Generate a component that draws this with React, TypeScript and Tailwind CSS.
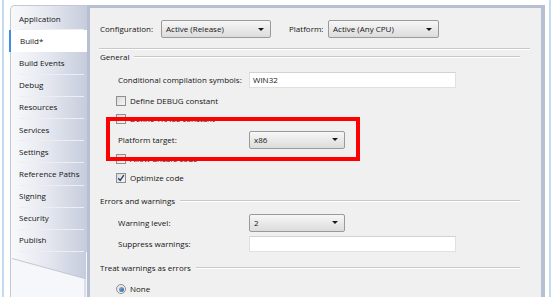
import React from "react";

const tabs = [
  "Application",
  "Build*",
  "Build Events",
  "Debug",
  "Resources",
  "Services",
  "Settings",
  "Reference Paths",
  "Signing",
  "Security",
  "Publish",
];

function Arrow() {
  return (
    <svg width="6" height="3" viewBox="0 0 6 3">
      <path d="M0 0h6L3 3z" fill="#1a1a1a" />
    </svg>
  );
}

function Select({ value, className }: { value: string; className: string }) {
  return (
    <div
      className={`flex h-[18px] items-center justify-between rounded-[2px] border border-[#9a9a9a] bg-gradient-to-b from-[#f7f7f7] to-[#dcdcdc] pl-[4px] pr-[6px] ${className}`}
    >
      <span>{value}</span>
      <Arrow />
    </div>
  );
}

function Input({ value, className }: { value?: string; className: string }) {
  return (
    <div
      className={`flex h-[16px] items-center border border-[#e0e0e0] border-t-[#d2d2d2] bg-white pl-[3px] ${className}`}
    >
      {value}
    </div>
  );
}

function Check({ checked }: { checked?: boolean }) {
  return (
    <div className="flex h-[10px] w-[10px] items-center justify-center border border-[#8e8f8f] bg-gradient-to-br from-[#d9d9d9] to-[#f7f7f7]">
      {checked && (
        <svg width="8" height="8" viewBox="0 0 8 8">
          <path d="M1.2 4.2L3.2 6.4L6.8 1.2" fill="none" stroke="#2a3f6e" strokeWidth="1.4" />
        </svg>
      )}
    </div>
  );
}

function Header({ label, className }: { label: string; className: string }) {
  return (
    <div className={`flex h-[12px] items-center pl-[10px] pr-[21px] ${className}`}>
      <span>{label}</span>
      <div className="ml-[5px] h-[2px] flex-1 border-t border-b border-t-[#c9c9c9] border-b-white" />
    </div>
  );
}

function CheckRow({ label, checked, className }: { label: string; checked?: boolean; className: string }) {
  return (
    <div className={`flex h-[14px] items-center gap-[4px] pl-[26px] ${className}`}>
      <Check checked={checked} />
      <span>{label}</span>
    </div>
  );
}

export default function App() {
  return (
    <div className="flex h-[297px] w-[552px] overflow-hidden bg-white font-['Open_Sans','Noto_Sans',sans-serif] text-[8px] leading-none text-[#151515]">
      {/* left window edge */}
      <div className="w-[10px] shrink-0">
        <div className="ml-[2px] h-full w-[2px] bg-[#c4dcf3]" />
      </div>

      {/* tab strip */}
      <div className="flex w-[77px] shrink-0 flex-col pt-[5px]">
        <div className="flex flex-col rounded-tl-[5px] border-l border-t border-[#c4c8d2] bg-gradient-to-r from-[#f8f9fb] via-[#e4e7ef] to-[#c6ccdc] pt-[2px]">
          {tabs.map((t) => {
            const sel = t === "Build*";
            return (
              <div
                key={t}
                className={`flex h-[22.2px] items-center ${
                  sel ? "-ml-[2px] border-l-[2px] border-[#3d8fe4] bg-white pl-[9px]" : "pl-[8px]"
                }`}
              >
                <div className="flex h-full flex-1 flex-col">
                  <div className="flex flex-1 items-center">{t}</div>
                  {!sel && <div className="mr-[3px] h-[1px] bg-[#eceef3]" />}
                </div>
              </div>
            );
          })}
        </div>
        <div className="flex-1">
          <svg width="77" height="100%" viewBox="0 0 77 45" preserveAspectRatio="none" className="block h-full">
            <defs>
              <linearGradient id="tg" x1="0" y1="0" x2="1" y2="0">
                <stop offset="0" stopColor="#f8f9fb" />
                <stop offset="0.5" stopColor="#e4e7ef" />
                <stop offset="1" stopColor="#c6ccdc" />
              </linearGradient>
            </defs>
            <rect x="0" y="0" width="77" height="45" fill="#f6f7fb" />
            <polygon points="0,0 76,0 76,27 0,6" fill="url(#tg)" />
            <line x1="2" y1="6.5" x2="75" y2="26.5" stroke="#c2c7d4" strokeWidth="1" />
            <line x1="75" y1="26.5" x2="75" y2="45" stroke="#c2c7d4" strokeWidth="1" />
            <line x1="0.5" y1="0" x2="0.5" y2="45" stroke="#c4c8d2" strokeWidth="1" />
          </svg>
        </div>
      </div>

      {/* main panel */}
      <div className="relative mt-[5px] flex w-[458px] shrink-0 flex-col border-l-[3px] border-r-[4px] border-t-[3px] border-[#b7bfd3] bg-[#f0f0f0]">
        {/* configuration row */}
        <div className="mt-[12px] flex h-[18px] items-center pl-[10px]">
          <span className="w-[61px]">Configuration:</span>
          <Select value="Active (Release)" className="w-[110px]" />
          <span className="ml-[18px] w-[39px]">Platform:</span>
          <Select value="Active (Any CPU)" className="w-[111px]" />
        </div>
        <div className="ml-[9px] mr-[11px] mt-[10px] h-[2px] border-t border-b border-t-[#c9c9c9] border-b-white" />

        <Header label="General" className="mt-[1px]" />

        <div className="mt-[9px] flex h-[16px] items-center pl-[28px]">
          <span className="w-[131px]">Conditional compilation symbols:</span>
          <Input value="WIN32" className="w-[207px]" />
        </div>

        <CheckRow label="Define DEBUG constant" className="mt-[6px]" />
        <CheckRow label="Define TRACE constant" className="mt-[4px]" />

        <div className="mt-[5px] flex h-[17px] items-center pl-[28px]">
          <span className="w-[131px]">Platform target:</span>
          <Select value="x86" className="h-[17px] w-[96px]" />
        </div>

        <CheckRow label="Allow unsafe code" className="mt-[4px]" />
        <CheckRow label="Optimize code" checked className="mt-[5px]" />

        <Header label="Errors and warnings" className="mt-[10px]" />

        <div className="mt-[7px] flex h-[17px] items-center pl-[28px]">
          <span className="w-[131px]">Warning level:</span>
          <Select value="2" className="h-[17px] w-[96px]" />
        </div>

        <div className="mt-[5px] flex h-[16px] items-center pl-[28px]">
          <span className="w-[131px]">Suppress warnings:</span>
          <Input className="w-[207px]" />
        </div>

        <Header label="Treat warnings as errors" className="mt-[10px]" />

        <div className="mt-[8px] flex h-[14px] items-center gap-[4px] pl-[26px]">
          <div className="flex h-[10px] w-[10px] items-center justify-center rounded-full border border-[#8e8f8f] bg-gradient-to-br from-[#e2e2e2] to-[#f8f8f8]">
            <div className="h-[5px] w-[5px] rounded-full bg-gradient-to-br from-[#8fb2e0] to-[#2f5da0]" />
          </div>
          <span>None</span>
        </div>

        {/* red annotation box */}
        <div className="absolute left-[16px] top-[109px] h-[44px] w-[254px] border-[4px] border-[#ff0000]" />
      </div>

      {/* right window edge */}
      <div className="w-[7px] shrink-0">
        <div className="ml-[4px] h-full w-[2px] bg-[#c4dcf3]" />
      </div>
    </div>
  );
}
